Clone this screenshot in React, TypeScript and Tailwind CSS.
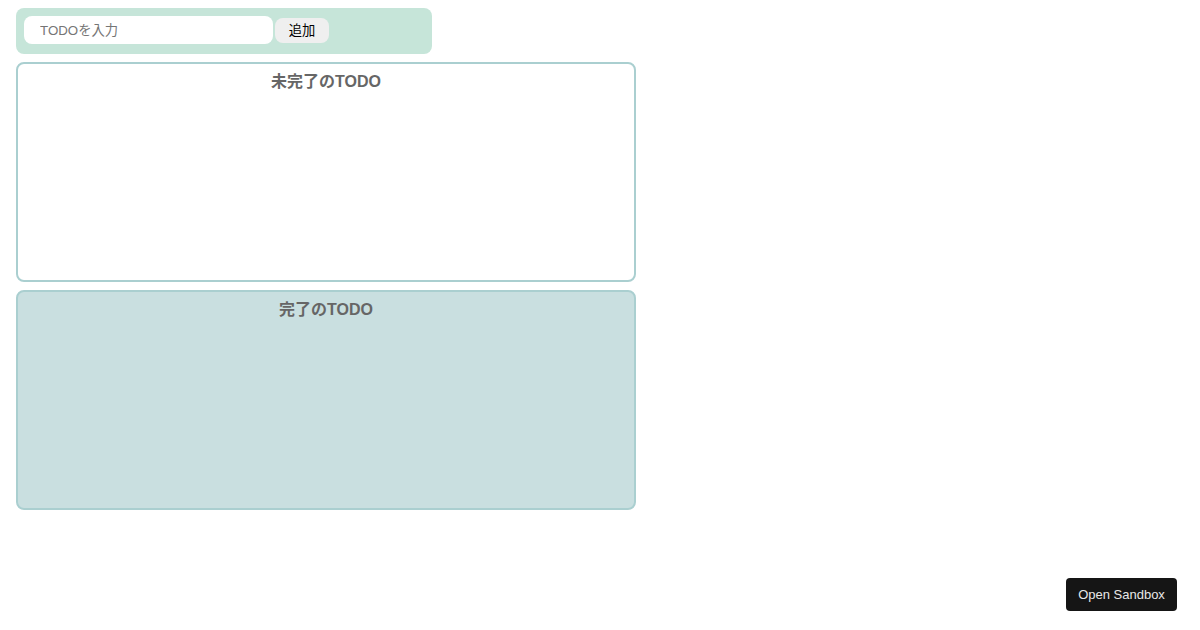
import React, { useState } from 'react';

const font = { fontFamily: '"Liberation Sans", "Noto Sans CJK JP", sans-serif' };

export default function App() {
  const [todoText, setTodoText] = useState('');
  const [incompleteTodos] = useState<string[]>([]);
  const [completeTodos] = useState<string[]>([]);

  return (
    <div className="min-h-screen bg-white px-2 text-black" style={font}>
      <div className="m-2 flex h-[46px] w-[416px] items-start rounded-lg bg-[#c6e5d9] p-2">
        <input
          className="h-7 w-[249px] rounded-lg border-none bg-white px-4 text-[13.3px] text-gray-700 outline-none placeholder:text-[#757575]"
          placeholder="TODOを入力"
          value={todoText}
          onChange={(e) => setTodoText(e.target.value)}
        />
        <button className="ml-0.5 mt-0.5 h-[25px] w-[54px] rounded-lg bg-[#efefef] text-[13.3px] text-black">
          追加
        </button>
      </div>

      <div className="m-2 min-h-[220px] w-[620px] rounded-lg border-2 border-[#aacfd0] bg-white p-2">
        <p className="text-center text-base font-bold leading-5 text-[#666]">未完了のTODO</p>
        <ul>
          {incompleteTodos.map((t) => (
            <li key={t}>{t}</li>
          ))}
        </ul>
      </div>

      <div className="m-2 min-h-[220px] w-[620px] rounded-lg border-2 border-[#aacfd0] bg-[#c9dfe0] p-2">
        <p className="text-center text-base font-bold leading-5 text-[#666]">完了のTODO</p>
        <ul>
          {completeTodos.map((t) => (
            <li key={t}>{t}</li>
          ))}
        </ul>
      </div>

      <button className="fixed bottom-[19px] right-[23px] h-[33px] w-[111px] rounded bg-[#151515] text-[13px] text-[#e8e8e8]">
        Open Sandbox
      </button>
    </div>
  );
}
